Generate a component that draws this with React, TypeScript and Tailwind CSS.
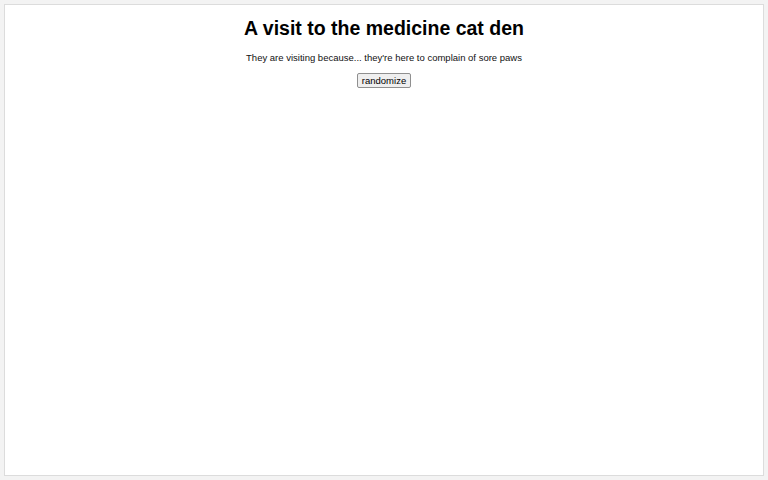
export default function App() {
  return (
    <div className="w-[768px] h-[480px] bg-[#f3f3f3] p-[4px]" style={{ fontFamily: '"Liberation Sans", Arial, sans-serif' }}>
      <div className="h-full bg-white border border-[#dcdcdc] flex flex-col items-center text-black">
        <h1 className="mt-[12px] text-[19.5px] leading-[22px] font-bold">A visit to the medicine cat den</h1>
        <p className="mt-[13px] text-[9.5px] leading-[11px] text-[#111]">They are visiting because... they're here to complain of sore paws</p>
        <button className="mt-[10px] px-[4px] h-[15px] text-[9.5px] leading-[12px] bg-[#efefef] border border-[#8f8f8f] rounded-[2px]">randomize</button>
      </div>
    </div>
  );
}
